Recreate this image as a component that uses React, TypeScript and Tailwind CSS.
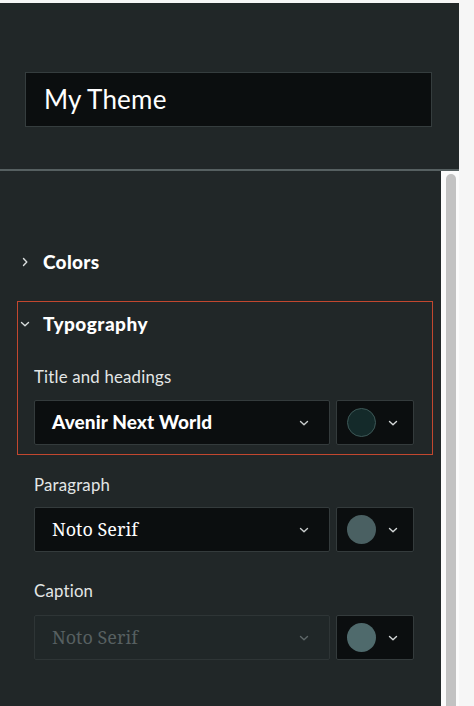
import React from "react";

const sans = { fontFamily: "Lato, 'Noto Sans', sans-serif" };
const serif = { fontFamily: "'Noto Serif', 'DejaVu Serif', 'Liberation Serif', serif" };

function Chevron({ dir, className }: { dir: "down" | "right"; className?: string }) {
  return (
    <svg width="10" height="10" viewBox="0 0 10 10" className={className} fill="none" stroke="currentColor" strokeWidth="1.4" strokeLinecap="round" strokeLinejoin="round">
      {dir === "down" ? <path d="M1.5 3.5 L5 6.8 L8.5 3.5" /> : <path d="M3.5 1.5 L6.8 5 L3.5 8.5" />}
    </svg>
  );
}

function Row({
  label,
  font,
  bold,
  disabled,
  circle,
  circleBorder,
  labelGap,
}: {
  label: string;
  font: string;
  bold?: boolean;
  disabled?: boolean;
  circle: string;
  circleBorder?: string;
  labelGap: string;
}) {
  return (
    <div className="flex flex-col">
      <div className={`h-[20px] leading-[20px] text-[16.8px] tracking-[0.2px] text-[#e3e6e6] ${labelGap}`} style={sans}>
        {label}
      </div>
      <div className="flex gap-[6px]">
        <div
          className={`w-[296px] h-[45px] flex items-center justify-between pl-[17px] pr-[20px] border rounded-[2px] ${
            disabled ? "bg-[#202728] border-[#2e3536] text-[#576061]" : "bg-[#0b0e0f] border-[#343b3c] text-white"
          }`}
        >
          <span
            className={bold ? "text-[19px] tracking-[0.1px]" : "text-[18px]"}
            style={bold ? { fontFamily: "Lato, 'Noto Sans', sans-serif", fontWeight: 900 } : serif}
          >
            {font}
          </span>
          <Chevron dir="down" className={disabled ? "text-[#5e6768]" : "text-[#c9cdcd]"} />
        </div>
        <div className="w-[78px] h-[45px] flex items-center pl-[10px] gap-[12px] bg-[#0b0e0f] border border-[#343b3c] rounded-[2px]">
          <div
            className="w-[29px] h-[29px] rounded-full"
            style={{ backgroundColor: circle, border: circleBorder ? `1px solid ${circleBorder}` : undefined }}
          />
          <Chevron dir="down" className="text-[#d4d8d8]" />
        </div>
      </div>
    </div>
  );
}

export default function App() {
  return (
    <div className="w-[474px] h-[706px] bg-[#f6f6f6] pt-[3px] overflow-hidden" style={sans}>
      <div className="w-[459px] h-[168px] bg-[#212728] border-b-[2px] border-[#566061] pt-[69px] pl-[25px]">
        <div className="w-[407px] h-[55px] bg-[#0b0e0f] border border-[#353d3e] flex items-center pl-[18px]">
          <span className="text-[26px] text-white tracking-[0.2px]">My Theme</span>
        </div>
      </div>
      <div className="flex h-[535px]">
        <div className="w-[441px] bg-[#212728] flex flex-col">
          <div className="mt-[79px] h-[24px] flex items-center pl-[20px]">
            <Chevron dir="right" className="text-[#d9dddd]" />
            <span className="ml-[13px] text-[19px] tracking-[0.3px] text-white" style={{ fontWeight: 900 }}>
              Colors
            </span>
          </div>
          <div className="mt-[27px] ml-[17px] w-[416px] border border-[#c2472f] pt-[10px] pb-[9px] pl-[16px]">
            <div className="h-[24px] flex items-center -ml-[14px]">
              <Chevron dir="down" className="text-[#d9dddd]" />
              <span className="ml-[13px] text-[19px] tracking-[0.5px] text-white" style={{ fontWeight: 900 }}>
                Typography
              </span>
            </div>
            <Row label="Title and headings" font="Avenir Next World" bold circle="#142a2a" circleBorder="#3d5857" labelGap="mt-[31px] mb-[13px]" />
          </div>
          <div className="ml-[34px] mt-[20px]">
            <Row label="Paragraph" font="Noto Serif" circle="#4a6062" labelGap="mb-[12px]" />
          </div>
          <div className="ml-[34px] mt-[29px]">
            <Row label="Caption" font="Noto Serif" disabled circle="#4f6a6c" labelGap="mb-[14px]" />
          </div>
        </div>
        <div className="w-[18px] bg-[#fbfbfb] pl-[5px] pt-[3px]">
          <div className="w-[10px] h-full bg-[#c2c2c2] rounded-t-full" />
        </div>
      </div>
    </div>
  );
}
